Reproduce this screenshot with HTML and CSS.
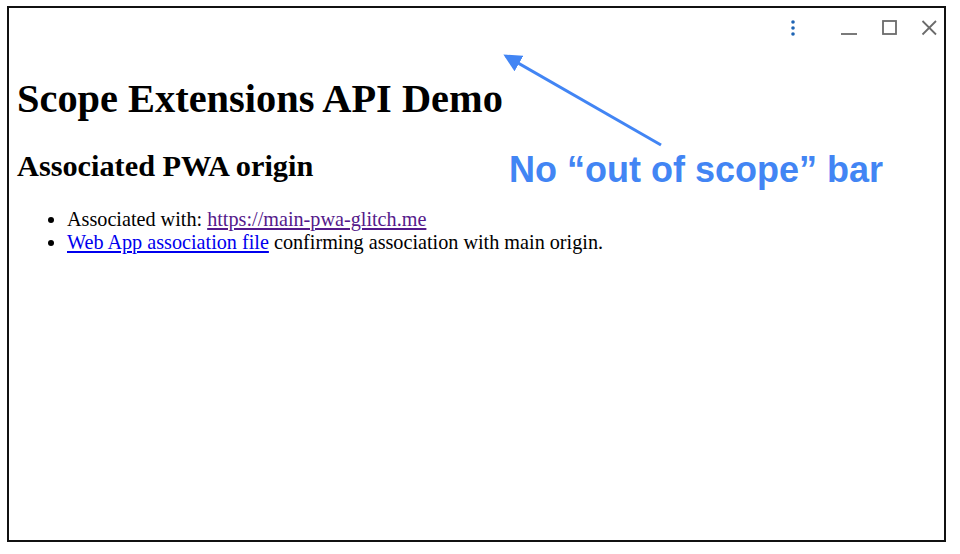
FILE: index.html
```html
<!DOCTYPE html>
<html lang="en">
<head>
<meta charset="utf-8">
<title>Scope Extensions API Demo</title>
<link rel="stylesheet" href="styles.css">
</head>
<body>
<div class="window">
  <div class="titlebar">
    <svg class="icon dots" width="16" height="16" viewBox="0 0 16 16"><circle cx="8" cy="2" r="1.8"/><circle cx="8" cy="8" r="1.8"/><circle cx="8" cy="14" r="1.8"/></svg>
    <svg class="icon ctl" width="16" height="16" viewBox="0 0 16 16"><line x1="0" y1="14" x2="16" y2="14"/></svg>
    <svg class="icon ctl" width="16" height="16" viewBox="0 0 16 16"><rect x="2" y="1" width="13" height="13"/></svg>
    <svg class="icon ctl" width="16" height="16" viewBox="0 0 16 16"><line x1="1.5" y1="1" x2="15" y2="14.5"/><line x1="15" y1="1" x2="1.5" y2="14.5"/></svg>
  </div>
  <main class="content">
    <h1>Scope Extensions API Demo</h1>
    <h2>Associated PWA origin</h2>
    <ul>
      <li>Associated with: <a class="visited" href="#">https://main-pwa-glitch.me</a></li>
      <li><a class="link" href="#">Web App association file</a> confirming association with main origin.</li>
    </ul>
  </main>
  <svg class="arrow" width="200" height="120" viewBox="0 0 200 120">
    <defs>
      <marker id="head" markerWidth="6" markerHeight="6" refX="5" refY="3" orient="auto" markerUnits="strokeWidth">
        <path d="M0,0 L6,3 L0,6 Z" fill="#4285f4"/>
      </marker>
    </defs>
    <line x1="178" y1="100" x2="23" y2="11" stroke="#4285f4" stroke-width="3" marker-end="url(#head)"/>
  </svg>
  <div class="note">No “out of scope” bar</div>
</div>
</body>
</html>
```
FILE: styles.css
```css
html, body {
  margin: 0;
  padding: 0;
  background: #ffffff;
}
body {
  padding: 6px 0 0 7px;
}
.window {
  position: relative;
  box-sizing: border-box;
  width: 939px;
  height: 536px;
  border: 2px solid #111111;
  background: #ffffff;
  font-family: "Liberation Serif", "Times New Roman", serif;
  color: #000000;
}
.titlebar {
  height: 40px;
  display: flex;
  align-items: center;
  justify-content: flex-end;
  gap: 24px;
  padding-right: 7px;
}
.icon {
  display: block;
}
.dots {
  fill: #1e64b4;
  margin-right: 16px;
}
.ctl {
  fill: none;
  stroke: #6b6b6b;
  stroke-width: 1.8;
}
.content {
  padding: 0 8px;
}
h1 {
  font-size: 40.4px;
  line-height: 46px;
  font-weight: bold;
  margin: 28px 0 27px;
}
h2 {
  font-size: 30.3px;
  line-height: 34px;
  font-weight: bold;
  margin: 0 0 25px;
}
ul {
  margin: 0;
  padding-left: 50px;
  font-size: 20.2px;
  line-height: 23px;
}
a {
  text-decoration: underline;
}
.visited {
  color: #551a8b;
}
.link {
  color: #0000ee;
}
.arrow {
  position: absolute;
  left: 474px;
  top: 37px;
}
.note {
  position: absolute;
  left: 500px;
  top: 144px;
  font-family: "Liberation Sans", Arial, sans-serif;
  font-weight: bold;
  font-size: 36px;
  line-height: 36px;
  color: #4285f4;
  white-space: nowrap;
}
```
